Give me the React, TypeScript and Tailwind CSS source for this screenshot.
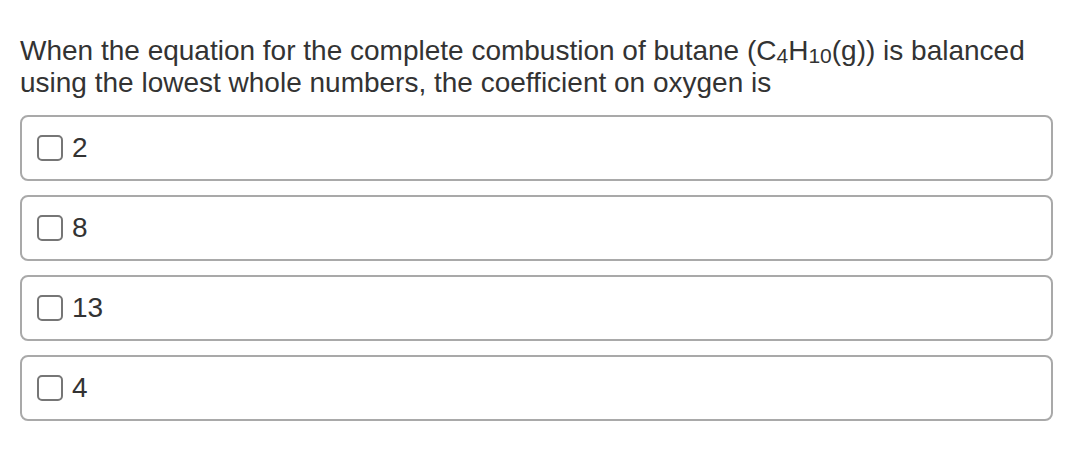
const options = ["2", "8", "13", "4"];

export default function App() {
  return (
    <div className="min-h-screen bg-white px-5 pt-[35px] text-[#333333]" style={{ fontFamily: '"Liberation Sans", Arial, sans-serif' }}>
      <p className="text-[28px] leading-[32px]">
        When the equation for the complete combustion of butane (C<sub className="bottom-[-3px] text-[21px]">4</sub>H<sub className="bottom-[-3px] text-[21px]">10</sub>(g)) is balanced
        <br />
        using the lowest whole numbers, the coefficient on oxygen is
      </p>
      <div className="mt-[16px] flex w-[1033px] flex-col gap-[14px]">
        {options.map((opt) => (
          <label
            key={opt}
            className="flex h-[66px] items-center gap-[9px] rounded-[8px] border-2 border-[#a9a9a9] pl-[15px]"
          >
            <span className="h-[26px] w-[26px] rounded-[5px] border-2 border-[#767676] bg-white" />
            <span className="text-[28px] leading-none">{opt}</span>
          </label>
        ))}
      </div>
    </div>
  );
}
